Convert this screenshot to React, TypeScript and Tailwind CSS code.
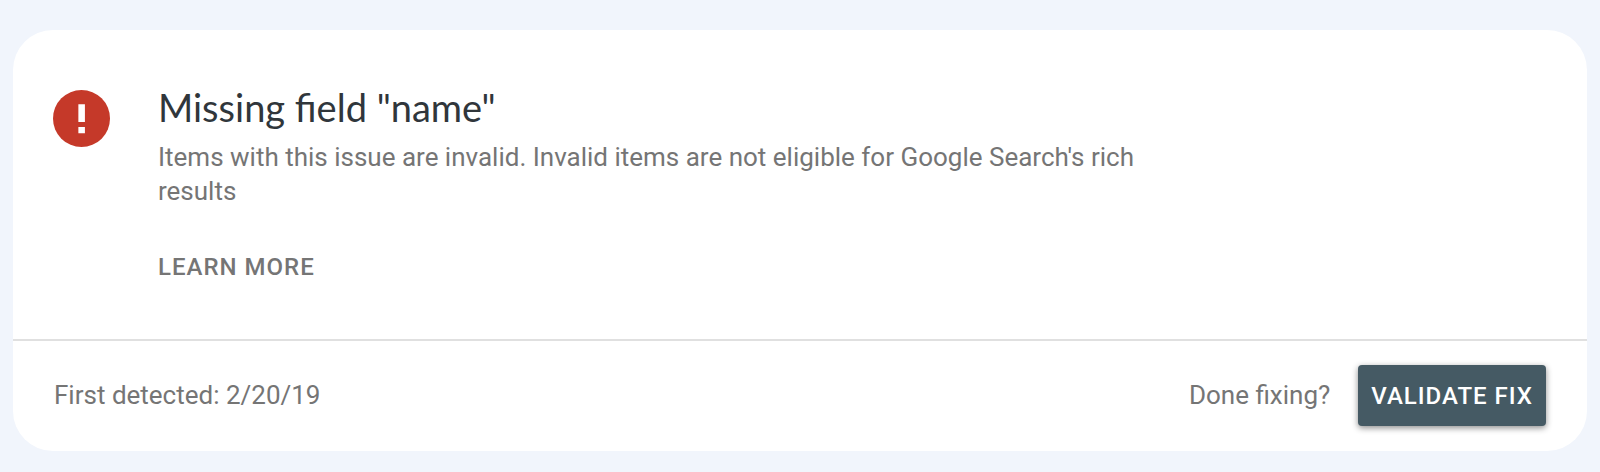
export default function App() {
  return (
    <main className="min-h-screen bg-[#f1f5fc] px-[13px] pt-[30px] pb-5 font-[Roboto,sans-serif] text-[#757575]">
      <section className="overflow-hidden rounded-[40px] bg-white">
        <div className="flex gap-12 px-10 pt-14 pb-14">
          <svg className="mt-1 size-[57px] shrink-0" viewBox="2 2 20 20" role="img" aria-label="Error">
            <circle cx="12" cy="12" r="10" fill="#c53929" />
            <path d="M10.9 7h2.3v6.2h-2.3zM10.9 15h2.3v2.2h-2.3z" fill="#fff" />
          </svg>
          <div className="max-w-[1000px]">
            <h1 className="font-[Lato,sans-serif] text-[38px] leading-[42px] text-[#30363b]">Missing field "name"</h1>
            <p className="mt-3 text-[26px] leading-[34px]">
              Items with this issue are invalid. Invalid items are not eligible for Google Search's rich results
            </p>
            <a href="#learn-more" className="mt-[43px] inline-block text-2xl font-medium tracking-[1px]">
              LEARN MORE
            </a>
          </div>
        </div>
        <footer className="flex items-center justify-between border-t-2 border-[#e0e0e0] px-[41px] pt-6 pb-[25px] text-[26px]">
          <span>First detected: 2/20/19</span>
          <div className="flex items-center gap-7">
            <span>Done fixing?</span>
            <button type="button" className="h-[61px] rounded bg-[#455a64] px-[13px] text-2xl font-medium tracking-[1px] text-white shadow-[0_2px_6px_rgba(0,0,0,0.45)]">
              VALIDATE FIX
            </button>
          </div>
        </footer>
      </section>
    </main>
  );
}
